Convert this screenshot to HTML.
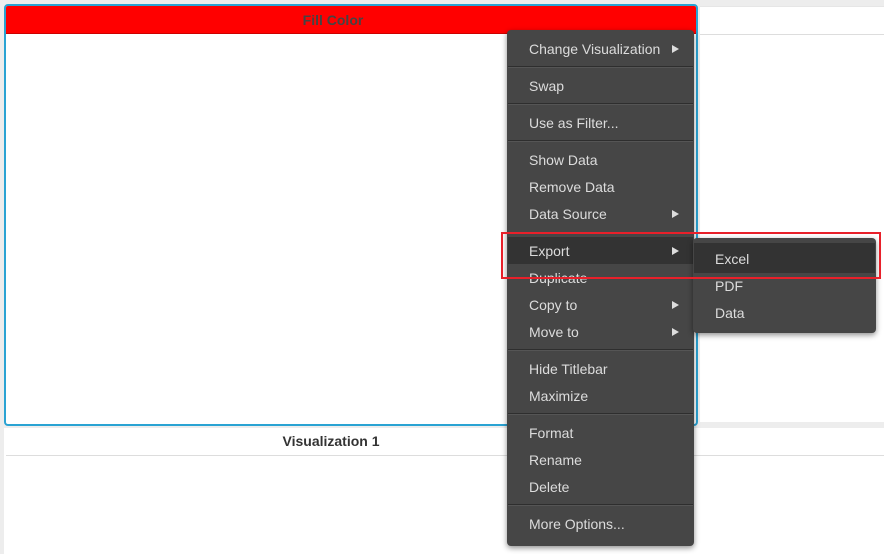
<!DOCTYPE html>
<html><head><style>
*{box-sizing:border-box;margin:0;padding:0}
body{width:884px;height:554px;background:#ededed;position:relative;overflow:hidden;font-family:"Liberation Sans",Arial,sans-serif}
.abs{position:absolute}
.menu{position:absolute;background:#464646;border-radius:4px;box-shadow:0 2px 6px rgba(0,0,0,.45)}
.it{position:absolute;left:22px;color:#dcdcdc;font-size:14px;line-height:16px}
.ar{position:absolute;left:165px;width:0;height:0;border-left:7px solid #ddd;border-top:4px solid transparent;border-bottom:4px solid transparent}
.sep{position:absolute;left:1px;right:1px;height:2px;border-top:1px solid #2e2e2e;border-bottom:1px solid #555}
</style></head><body>
<!-- right panels -->
<div class="abs" style="left:700px;top:6px;width:184px;height:416px;background:#fff;border-top:1px solid #e6e6e6"></div>
<div class="abs" style="left:700px;top:34px;width:184px;height:1px;background:#ddd"></div>
<div class="abs" style="left:698px;top:428px;width:186px;height:126px;background:#fff"></div>
<div class="abs" style="left:698px;top:455px;width:186px;height:1px;background:#ddd"></div>
<!-- bottom panel -->
<div class="abs" style="left:4px;top:428px;width:694px;height:126px;background:#fff"></div>
<div class="abs" style="left:6px;top:455px;width:692px;height:1px;background:#ddd"></div>
<div class="abs" style="left:4px;top:433px;width:654px;text-align:center;font-size:14px;font-weight:bold;color:#333">Visualization 1</div>
<!-- top panel -->
<div class="abs" style="left:4px;top:4px;width:694px;height:422px;background:#fff;border:2px solid #2aa3d3;border-radius:4px;overflow:hidden">
  <div style="height:28px;background:#ff0000;border-bottom:1px solid #c00;text-align:center;font-size:14px;font-weight:bold;color:#444;line-height:29px;padding-right:36px">Fill Color</div>
</div>
<!-- main menu -->
<div class="menu" style="left:507px;top:30px;width:187px;height:516px">
  <div class="it" style="top:11px">Change Visualization</div><div class="ar" style="top:15px"></div>
  <div class="sep" style="top:36px"></div>
  <div class="it" style="top:48px">Swap</div>
  <div class="sep" style="top:73px"></div>
  <div class="it" style="top:85px">Use as Filter...</div>
  <div class="sep" style="top:110px"></div>
  <div class="it" style="top:122px">Show Data</div>
  <div class="it" style="top:149px">Remove Data</div>
  <div class="it" style="top:176px">Data Source</div><div class="ar" style="top:180px"></div>
  <div class="abs" style="left:1px;right:1px;top:207px;height:27px;background:#333"></div>
  <div class="it" style="top:213px">Export</div><div class="ar" style="top:217px"></div>
  <div class="it" style="top:240px">Duplicate</div>
  <div class="it" style="top:267px">Copy to</div><div class="ar" style="top:271px"></div>
  <div class="it" style="top:294px">Move to</div><div class="ar" style="top:298px"></div>
  <div class="sep" style="top:319px"></div>
  <div class="it" style="top:331px">Hide Titlebar</div>
  <div class="it" style="top:358px">Maximize</div>
  <div class="sep" style="top:383px"></div>
  <div class="it" style="top:395px">Format</div>
  <div class="it" style="top:422px">Rename</div>
  <div class="it" style="top:449px">Delete</div>
  <div class="sep" style="top:474px"></div>
  <div class="it" style="top:486px">More Options...</div>
</div>
<!-- submenu -->
<div class="menu" style="left:693px;top:238px;width:183px;height:95px">
  <div class="abs" style="left:1px;right:1px;top:5px;height:30px;background:#333"></div>
  <div class="it" style="top:13px">Excel</div>
  <div class="it" style="top:40px">PDF</div>
  <div class="it" style="top:67px">Data</div>
</div>
<!-- red highlight -->
<div class="abs" style="left:501px;top:232px;width:380px;height:47px;border:2px solid #e8202a"></div>
</body></html>
